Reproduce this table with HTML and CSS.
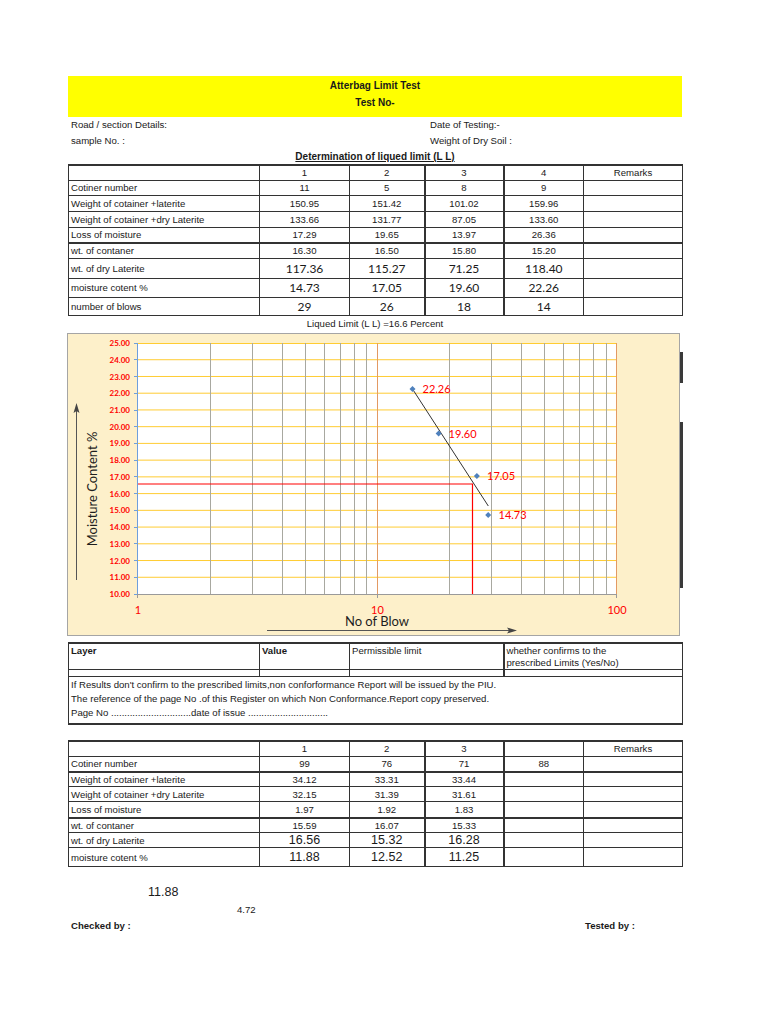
FILE: index.html
```html
<!DOCTYPE html>
<html>
<head>
<meta charset="utf-8">
<title>Atterbag Limit Test</title>
<link rel="stylesheet" href="styles.css">
</head>
<body>
<div class="page">
  <header class="banner">
    <div>Atterbag Limit Test</div>
    <div>Test No-</div>
  </header>

  <div class="info">
    <div>Road / section Details:</div>
    <div>Date of Testing:-</div>
    <div>sample No. :</div>
    <div>Weight of Dry Soil :</div>
  </div>

  <h2 class="det">Determination of liqued limit (L L)</h2>

  <table class="data t1">
    <colgroup><col class="c-lab"><col class="c-1"><col class="c-2"><col class="c-3"><col class="c-4"><col class="c-rem"></colgroup>
    <tr class="h15"><td></td><td>1</td><td>2</td><td>3</td><td>4</td><td>Remarks</td></tr>
    <tr class="h15"><td class="lab">Cotiner number</td><td>11</td><td>5</td><td>8</td><td>9</td><td></td></tr>
    <tr class="h16"><td class="lab">Weight of cotainer +laterite</td><td>150.95</td><td>151.42</td><td>101.02</td><td>159.96</td><td></td></tr>
    <tr class="h16"><td class="lab">Weight of cotainer +dry Laterite</td><td>133.66</td><td>131.77</td><td>87.05</td><td>133.60</td><td></td></tr>
    <tr class="h16 thick"><td class="lab">Loss of moisture</td><td>17.29</td><td>19.65</td><td>13.97</td><td>26.36</td><td></td></tr>
    <tr class="h15"><td class="lab">wt. of contaner</td><td>16.30</td><td>16.50</td><td>15.80</td><td>15.20</td><td></td></tr>
    <tr class="h20 big"><td class="lab">wt. of dry Laterite</td><td>117.36</td><td>115.27</td><td>71.25</td><td>118.40</td><td></td></tr>
    <tr class="h19 big"><td class="lab">moisture cotent %</td><td>14.73</td><td>17.05</td><td>19.60</td><td>22.26</td><td></td></tr>
    <tr class="h18 big"><td class="lab">number of blows</td><td>29</td><td>26</td><td>18</td><td>14</td><td></td></tr>
  </table>

  <p class="ll">Liqued Limit (L L) =16.6 Percent</p>

  <svg class="chart" width="620" height="306" viewBox="66 332 620 306" xmlns="http://www.w3.org/2000/svg">
    <rect x="67.5" y="333.5" width="612" height="302" fill="#fdf0ca" stroke="#a5a5a5"/>
    <rect x="680" y="352" width="3" height="31" fill="#3a3a3a"/>
    <rect x="680" y="422" width="3" height="166" fill="#3a3a3a"/>
    <rect x="138" y="343" width="479" height="251" fill="#ffffff"/>
    <g stroke="#ffc000" stroke-width="1" opacity="0.8">
      <line x1="138" x2="617" y1="577.27" y2="577.27"/>
      <line x1="138" x2="617" y1="560.53" y2="560.53"/>
      <line x1="138" x2="617" y1="543.8" y2="543.8"/>
      <line x1="138" x2="617" y1="527.07" y2="527.07"/>
      <line x1="138" x2="617" y1="510.33" y2="510.33"/>
      <line x1="138" x2="617" y1="493.6" y2="493.6"/>
      <line x1="138" x2="617" y1="476.87" y2="476.87"/>
      <line x1="138" x2="617" y1="460.13" y2="460.13"/>
      <line x1="138" x2="617" y1="443.4" y2="443.4"/>
      <line x1="138" x2="617" y1="426.67" y2="426.67"/>
      <line x1="138" x2="617" y1="409.93" y2="409.93"/>
      <line x1="138" x2="617" y1="393.2" y2="393.2"/>
      <line x1="138" x2="617" y1="376.47" y2="376.47"/>
      <line x1="138" x2="617" y1="359.73" y2="359.73"/>
      <line x1="138" x2="617" y1="343.5" y2="343.5"/>
    </g>
    <g stroke="#a8a8a0" stroke-width="1">
      <line x1="210.5" x2="210.5" y1="343" y2="594"/>
      <line x1="252.5" x2="252.5" y1="343" y2="594"/>
      <line x1="282.5" x2="282.5" y1="343" y2="594"/>
      <line x1="305.5" x2="305.5" y1="343" y2="594"/>
      <line x1="324.5" x2="324.5" y1="343" y2="594"/>
      <line x1="340.5" x2="340.5" y1="343" y2="594"/>
      <line x1="354.5" x2="354.5" y1="343" y2="594"/>
      <line x1="366.5" x2="366.5" y1="343" y2="594"/>
      <line x1="449.5" x2="449.5" y1="343" y2="594"/>
      <line x1="491.5" x2="491.5" y1="343" y2="594"/>
      <line x1="521.5" x2="521.5" y1="343" y2="594"/>
      <line x1="544.5" x2="544.5" y1="343" y2="594"/>
      <line x1="563.5" x2="563.5" y1="343" y2="594"/>
      <line x1="579.5" x2="579.5" y1="343" y2="594"/>
      <line x1="593.5" x2="593.5" y1="343" y2="594"/>
      <line x1="606.5" x2="606.5" y1="343" y2="594"/>
    </g>
    <g stroke="#e39a63" stroke-width="1">
      <line x1="377.5" x2="377.5" y1="343" y2="594"/>
      <line x1="616.5" x2="616.5" y1="343" y2="594"/>
    </g>
    <line x1="137.5" x2="137.5" y1="343" y2="594.5" stroke="#6e9fdc"/>
    <line x1="137.5" x2="617" y1="594.5" y2="594.5" stroke="#9a9a9a"/>
    <g stroke="#6e9fdc">
      <line x1="134" x2="138" y1="594.5" y2="594.5"/>
      <line x1="134" x2="138" y1="577.5" y2="577.5"/>
      <line x1="134" x2="138" y1="560.5" y2="560.5"/>
      <line x1="134" x2="138" y1="543.5" y2="543.5"/>
      <line x1="134" x2="138" y1="527.5" y2="527.5"/>
      <line x1="134" x2="138" y1="510.5" y2="510.5"/>
      <line x1="134" x2="138" y1="493.5" y2="493.5"/>
      <line x1="134" x2="138" y1="476.5" y2="476.5"/>
      <line x1="134" x2="138" y1="460.5" y2="460.5"/>
      <line x1="134" x2="138" y1="443.5" y2="443.5"/>
      <line x1="134" x2="138" y1="426.5" y2="426.5"/>
      <line x1="134" x2="138" y1="410.5" y2="410.5"/>
      <line x1="134" x2="138" y1="393.5" y2="393.5"/>
      <line x1="134" x2="138" y1="376.5" y2="376.5"/>
      <line x1="134" x2="138" y1="359.5" y2="359.5"/>
      <line x1="134" x2="138" y1="343.5" y2="343.5"/>
    </g>
    <g stroke="#9a9a9a">
      <line x1="137.5" x2="137.5" y1="594" y2="598"/>
      <line x1="377.5" x2="377.5" y1="594" y2="598"/>
      <line x1="616.5" x2="616.5" y1="594" y2="598"/>
    </g>
    <g class="ylab" text-anchor="end">
      <text x="130" y="597">10.00</text>
      <text x="130" y="580.3">11.00</text>
      <text x="130" y="563.5">12.00</text>
      <text x="130" y="546.8">13.00</text>
      <text x="130" y="530.1">14.00</text>
      <text x="130" y="513.3">15.00</text>
      <text x="130" y="496.6">16.00</text>
      <text x="130" y="479.9">17.00</text>
      <text x="130" y="463.1">18.00</text>
      <text x="130" y="446.4">19.00</text>
      <text x="130" y="429.7">20.00</text>
      <text x="130" y="412.9">21.00</text>
      <text x="130" y="396.2">22.00</text>
      <text x="130" y="379.5">23.00</text>
      <text x="130" y="362.7">24.00</text>
      <text x="130" y="346">25.00</text>
    </g>
    <path d="M138 484 H472.5 V594" fill="none" stroke="#ff0000" stroke-width="1.2"/>
    <line x1="412.5" y1="389" x2="488.3" y2="506" stroke="#333" stroke-width="1"/>
    <g fill="#4f81bd">
      <polygon points="412.5,385.9 415.5,388.9 412.5,391.9 409.5,388.9"/>
      <polygon points="438.6,430.4 441.6,433.4 438.6,436.4 435.6,433.4"/>
      <polygon points="476.9,473 479.9,476 476.9,479 473.9,476"/>
      <polygon points="488.2,511.9 491.2,514.9 488.2,517.9 485.2,514.9"/>
    </g>
    <g class="plab">
      <text x="422.5" y="393">22.26</text>
      <text x="448.5" y="437.5">19.60</text>
      <text x="487" y="480">17.05</text>
      <text x="498.5" y="519">14.73</text>
    </g>
    <g class="xlab" text-anchor="middle">
      <text x="138" y="613.5">1</text>
      <text x="377.5" y="613.5">10</text>
      <text x="617" y="613.5">100</text>
    </g>
    <text class="axt" x="377" y="625.5" text-anchor="middle">No of Blow</text>
    <text class="axt" transform="translate(97 489) rotate(-90)" text-anchor="middle">Moisture Content %</text>
    <line x1="76.5" y1="580" x2="76.5" y2="410" stroke="#555" stroke-width="1"/>
    <polygon points="76.5,403 73.5,413 76.5,411 79.5,413" fill="#444"/>
    <line x1="267" y1="630.5" x2="510" y2="630.5" stroke="#555" stroke-width="1"/>
    <polygon points="517,630.5 507,627.5 509,630.5 507,633.5" fill="#444"/>
  </svg>

  <table class="layer">
    <colgroup><col class="c-lab"><col class="c-1"><col class="c-perm"><col class="c-wh"></colgroup>
    <tr class="r1"><td class="b">Layer</td><td class="b">Value</td><td>Permissible limit</td><td class="wh">whether confirms to the<br>prescribed Limits (Yes/No)</td></tr>
    <tr class="r2"><td></td><td></td><td></td><td class="wh"></td></tr>
    <tr class="r3"><td colspan="4">If Results don't confirm to the prescribed limits,non conforformance Report will be issued by the PIU.<br>The reference of the page No .of this Register on which Non Conformance.Report copy preserved.<br>Page No ..............................date of issue ..............................</td></tr>
  </table>

  <table class="data t2">
    <colgroup><col class="c-lab"><col class="c-1"><col class="c-2"><col class="c-3"><col class="c-4"><col class="c-rem"></colgroup>
    <tr class="h16"><td></td><td>1</td><td>2</td><td>3</td><td></td><td>Remarks</td></tr>
    <tr class="h15 thick"><td class="lab">Cotiner number</td><td>99</td><td>76</td><td>71</td><td>88</td><td></td></tr>
    <tr class="h15"><td class="lab">Weight of cotainer +laterite</td><td>34.12</td><td>33.31</td><td>33.44</td><td></td><td></td></tr>
    <tr class="h15"><td class="lab">Weight of cotainer +dry Laterite</td><td>32.15</td><td>31.39</td><td>31.61</td><td></td><td></td></tr>
    <tr class="h16 thick"><td class="lab">Loss of moisture</td><td>1.97</td><td>1.92</td><td>1.83</td><td></td><td></td></tr>
    <tr class="h15"><td class="lab">wt. of contaner</td><td>15.59</td><td>16.07</td><td>15.33</td><td></td><td></td></tr>
    <tr class="h15 big2"><td class="lab">wt. of dry Laterite</td><td>16.56</td><td>15.32</td><td>16.28</td><td></td><td></td></tr>
    <tr class="h19 big2"><td class="lab">moisture cotent %</td><td>11.88</td><td>12.52</td><td>11.25</td><td></td><td></td></tr>
  </table>

  <div class="foot">
    <div class="v1">11.88</div>
    <div class="v2">4.72</div>
    <div class="sign"><span>Checked by :</span><span>Tested by :</span></div>
  </div>
</div>
</body>
</html>
```

FILE: styles.css
```css
body {
  margin: 0;
  background: #ffffff;
  color: #1a1a1a;
  font-family: "Liberation Sans", Arial, sans-serif;
  font-size: 9.6px;
}

.page {
  width: 614px;
  margin-left: 68px;
  padding-top: 76px;
}

.banner {
  background: #ffff00;
  height: 41px;
  box-sizing: border-box;
  padding-top: 1px;
  line-height: 17px;
  text-align: center;
  font-weight: bold;
  font-size: 10px;
}

.info {
  display: grid;
  grid-template-columns: 359px 1fr;
  line-height: 16px;
}

.info div {
  padding-left: 3px;
}

.det {
  margin: 0;
  text-align: center;
  font-size: 10px;
  font-weight: bold;
  text-decoration: underline;
  line-height: 15px;
}

table {
  border-collapse: collapse;
  table-layout: fixed;
  width: 614px;
}

.c-lab { width: 191px; }
.c-1 { width: 90px; }
.c-2 { width: 75px; }
.c-3 { width: 79px; }
.c-4 { width: 80px; }
.c-rem { width: 99px; }
.c-perm { width: 154px; }
.c-wh { width: 179px; }

.data td {
  border: 1px solid #333;
  padding: 0 2px;
  text-align: center;
  vertical-align: middle;
  white-space: nowrap;
  line-height: 11px;
}

.data td.lab {
  text-align: left;
}

.data tr:first-child td {
  border-top-width: 2px;
}

.data td:nth-child(4),
.data td:nth-child(5) {
  border-left-width: 2px;
}

.data tr.thick td {
  border-bottom-width: 2px;
}

.h15 { height: 15px; }
.h16 { height: 16px; }
.h18 { height: 18px; }
.h19 { height: 19px; }
.h20 { height: 20px; }

.t1 tr.big td {
  font-family: Lato, "Liberation Sans", sans-serif;
  font-size: 12px;
}

.t1 tr.big td.lab,
.t2 tr.big2 td.lab {
  font-family: "Liberation Sans", Arial, sans-serif;
  font-size: 9.6px;
}

.t2 tr.big2 td {
  font-size: 12.5px;
}

.ll {
  margin: 1px 0 0;
  text-align: center;
  line-height: 14px;
}

.chart {
  display: block;
  margin: 1px 0 0 -2px;
}

.ylab {
  font-family: Lato, "Liberation Sans", sans-serif;
  font-size: 8px;
  font-weight: bold;
  fill: #ff0000;
}

.plab {
  font-family: Lato, "Liberation Sans", sans-serif;
  font-size: 11px;
  fill: #ff0000;
}

.xlab {
  font-family: Lato, "Liberation Sans", sans-serif;
  font-size: 11px;
  fill: #ff0000;
}

.axt {
  font-family: Lato, "Liberation Sans", sans-serif;
  font-size: 13px;
  fill: #1e1e1e;
}

.layer {
  margin-top: 4px;
}

.layer td {
  border: 1px solid #333;
  padding: 1px 2px 0;
  vertical-align: top;
  line-height: 12px;
}

.layer tr.r1 td {
  border-top-width: 2px;
  height: 22px;
}

.layer tr.r2 td {
  height: 6px;
  padding: 0;
}

.layer tr.r3 td {
  border-bottom-width: 2px;
  height: 45px;
  line-height: 14px;
  padding-top: 1px;
}

.layer td.wh {
  border-left-width: 2px;
}

.layer td.b {
  font-weight: bold;
}

.t2 {
  margin-top: 15px;
}

.foot {
  margin-top: 17px;
}

.foot .v1 {
  padding-left: 80px;
  font-size: 12.5px;
  line-height: 16px;
}

.foot .v2 {
  padding-left: 169px;
  line-height: 14px;
  margin-top: 3px;
}

.foot .sign {
  display: grid;
  grid-template-columns: 514px 1fr;
  padding-left: 3px;
  font-weight: bold;
  line-height: 14px;
  margin-top: 2px;
}
```
